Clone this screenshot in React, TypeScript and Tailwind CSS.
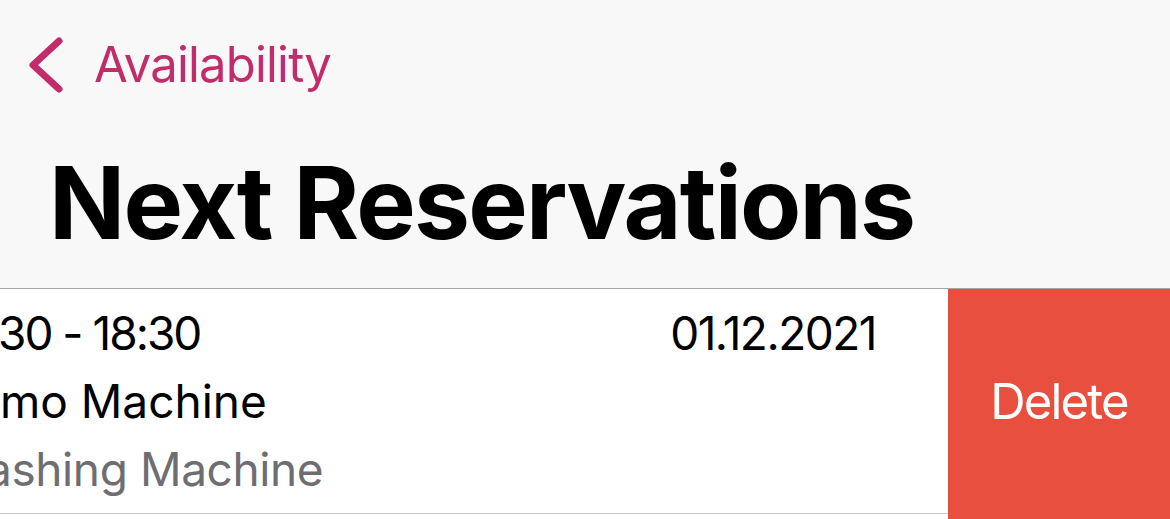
import React from 'react';

const font = { fontFamily: 'Inter, "Noto Sans", sans-serif' };

const BackChevron = () => (
  <svg width="40" height="60" viewBox="0 0 40 60" className="shrink-0">
    <path
      d="M31 6 L5 30 L31 54"
      fill="none"
      stroke="#c22c6a"
      strokeWidth="7"
      strokeLinecap="round"
      strokeLinejoin="round"
    />
  </svg>
);

export default function App() {
  return (
    <div
      className="w-[1170px] h-[519px] overflow-hidden bg-white flex flex-col"
      style={font}
    >
      {/* Navigation header */}
      <div className="bg-[#f8f8f8] h-[288px] shrink-0 flex flex-col pt-[35px]">
        <div className="flex items-center h-[60px] pl-[28px]">
          <BackChevron />
          <span className="ml-[26px] text-[49px] leading-[60px] tracking-[-0.8px] text-[#c22c6a]">
            Availability
          </span>
        </div>
        <h1 className="mt-[48px] ml-[49px] text-[100px] leading-[120px] font-bold text-black tracking-[-1.8px]">
          Next Reservations
        </h1>
      </div>

      {/* Swiped row */}
      <div className="border-t border-[#a5a5a5] flex flex-1">
        <div className="flex-1 flex flex-col">
          <div className="h-[225px] border-b border-[#c8c8cc] flex justify-between pt-[10px] overflow-hidden">
            <div className="flex flex-col text-[46px] leading-[68px] whitespace-nowrap">
              <span className="-ml-[2px] text-black tracking-[-2px]">30 - 18:30</span>
              <span className="text-black">mo Machine</span>
              <span className="-ml-[14px] text-[#6d6d72] tracking-[-0.4px]">ashing Machine</span>
            </div>
            <span className="text-[46px] leading-[68px] text-black mr-[72px] tracking-[-1.5px]">
              01.12.2021
            </span>
          </div>
        </div>
        <div className="w-[222px] bg-[#e94f3e] flex items-center justify-center pb-[4px]">
          <span className="text-white text-[49px] leading-[60px] tracking-[-1.8px]">Delete</span>
        </div>
      </div>
    </div>
  );
}
